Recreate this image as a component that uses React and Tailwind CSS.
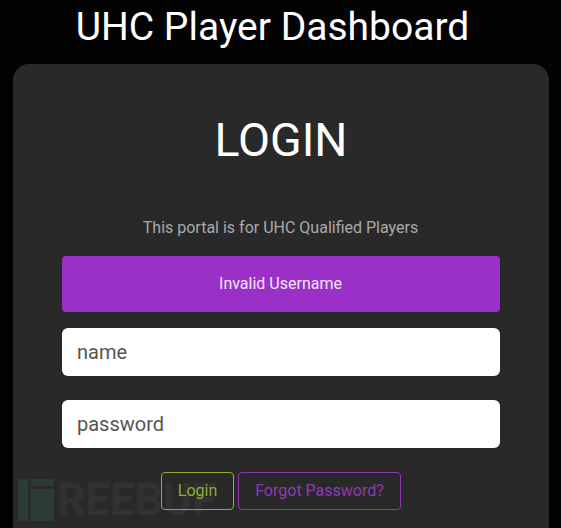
export default function App() {
  return (
    <div className="relative h-screen overflow-hidden bg-[#030303] font-['Roboto',sans-serif] text-white">
      <h1 className="h-16 pr-4 text-center text-[39px] leading-[54px]">UHC Player Dashboard</h1>

      <div className="ml-[13px] mr-3 h-[520px] rounded-t-2xl bg-[#29292a] px-[49px] pt-12 text-center">
        <h2 className="text-[46.5px] leading-[56px]">LOGIN</h2>
        <p className="mt-12 pr-px text-base leading-6 text-[#aaaaaa]">This portal is for UHC Qualified Players</p>

        <div className="mt-4 rounded bg-[#9b30c9] py-4 pr-px text-base leading-6 text-[#f2e6f8]">Invalid Username</div>

        <form className="mt-4 flex flex-col gap-6">
          <input
            placeholder="name"
            className="h-12 rounded-md bg-white px-[15px] text-xl text-[#555555] placeholder:text-[#555555] outline-none"
          />
          <input
            placeholder="password"
            className="h-12 rounded-md bg-white px-[15px] text-xl text-[#555555] placeholder:text-[#555555] outline-none"
          />
        </form>

        <div className="relative z-10 mt-6 flex justify-center gap-1">
          <button className="h-[38px] w-[73px] rounded border border-[#8fb02c] text-base text-[#8fb02c]">Login</button>
          <button className="h-[38px] w-[163px] rounded border border-[#9038b4] text-base text-[#9038b4]">Forgot Password?</button>
        </div>
      </div>

      {/* faint watermark over the card corner */}
      <div className="pointer-events-none absolute left-[18px] top-[479px] flex items-end gap-[3px]">
        <div className="h-[42px] w-[10px] bg-[#2c3b33]" />
        <div className="flex w-[23px] flex-col gap-[3px]">
          <div className="h-[7px] bg-[#2c3b33]" />
          <div className="h-[32px] bg-[#2c3b33]" />
        </div>
        <span className="text-[44px] font-bold leading-[42px] text-[#323232]">REEBUF</span>
      </div>
    </div>
  )
}
